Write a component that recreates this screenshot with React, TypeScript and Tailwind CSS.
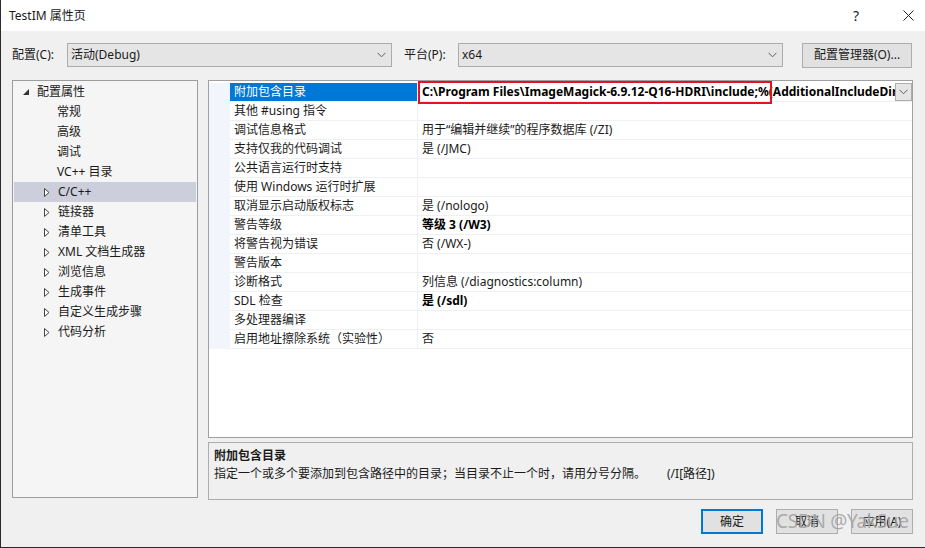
import type { ReactNode } from "react";

const rows: { name: string; value: string; bold?: boolean }[] = [
  { name: "附加包含目录", value: "C:\\Program Files\\ImageMagick-6.9.12-Q16-HDRI\\include;%(AdditionalIncludeDirectories)", bold: true },
  { name: "其他 #using 指令", value: "" },
  { name: "调试信息格式", value: "用于“编辑并继续”的程序数据库 (/ZI)" },
  { name: "支持仅我的代码调试", value: "是 (/JMC)" },
  { name: "公共语言运行时支持", value: "" },
  { name: "使用 Windows 运行时扩展", value: "" },
  { name: "取消显示启动版权标志", value: "是 (/nologo)" },
  { name: "警告等级", value: "等级 3 (/W3)", bold: true },
  { name: "将警告视为错误", value: "否 (/WX-)" },
  { name: "警告版本", value: "" },
  { name: "诊断格式", value: "列信息 (/diagnostics:column)" },
  { name: "SDL 检查", value: "是 (/sdl)", bold: true },
  { name: "多处理器编译", value: "" },
  { name: "启用地址擦除系统（实验性）", value: "否" },
];

const treeItems = ["链接器", "清单工具", "XML 文档生成器", "浏览信息", "生成事件", "自定义生成步骤", "代码分析"];

function Chevron() {
  return (
    <svg width="9" height="6" viewBox="0 0 9 6" className="shrink-0">
      <polyline points="0.5,0.8 4.5,4.8 8.5,0.8" fill="none" stroke="#606060" strokeWidth="1" />
    </svg>
  );
}

function Collapsed() {
  return (
    <svg width="6" height="9" viewBox="0 0 6 9" className="shrink-0">
      <polygon points="0.5,0.5 5,4.5 0.5,8.5" fill="#ffffff" stroke="#444444" strokeWidth="1" />
    </svg>
  );
}

function Combo({ children }: { children: ReactNode }) {
  return (
    <div className="flex h-[24px] w-[325px] items-center justify-between border border-[#acacac] bg-[#e5e5e5] pl-[3px] pr-[5px]">
      <span>{children}</span>
      <Chevron />
    </div>
  );
}

function Btn({ children, primary }: { children: ReactNode; primary?: boolean }) {
  return (
    <div
      className={`flex h-[25px] w-[62px] items-center justify-center bg-[#e1e1e1] ${
        primary ? "border-2 border-[#0078d7]" : "border border-[#adadad]"
      }`}
    >
      {children}
    </div>
  );
}

export default function App() {
  return (
    <div className="relative flex h-[548px] w-[925px] flex-col overflow-hidden border-b border-l border-[#2b2b2b] bg-[#f0f0f0] font-[Noto_Sans,Noto_Sans_CJK_SC,sans-serif] text-[12px] leading-[18px] text-[#1a1a1a]">
      <div className="flex h-[31px] shrink-0 items-center bg-white pl-[8px]">
        <span className="text-[12px]">TestIM 属性页</span>
        <span className="ml-auto mr-[44px] text-[14px] text-[#222]">?</span>
        <svg width="11" height="11" viewBox="0 0 11 11" className="mr-[11px]">
          <path d="M0.5 0.5 L10.5 10.5 M10.5 0.5 L0.5 10.5" stroke="#222" strokeWidth="1" />
        </svg>
      </div>

      <div className="mt-[12px] flex h-[24px] shrink-0 items-center pl-[11px]">
        <span className="w-[55px]">配置(C):</span>
        <Combo>活动(Debug)</Combo>
        <span className="ml-[12px] w-[54px]">平台(P):</span>
        <Combo>x64</Combo>
        <div className="ml-[19px] flex h-[25px] w-[110px] items-center justify-center border border-[#adadad] bg-[#e1e1e1]">
          配置管理器(O)...
        </div>
      </div>

      <div className="mt-[13px] flex h-[420px] shrink-0 pl-[11px]">
        <div className="h-[418px] w-[186px] border border-[#9c9c9f] bg-[#f5f5f5] pt-px">
          <div className="flex h-[20px] items-center pl-[10px]">
            <svg width="6" height="6" viewBox="0 0 6 6" className="shrink-0">
              <polygon points="6,0 6,6 0,6" fill="#333" />
            </svg>
            <span className="ml-[8px]">配置属性</span>
          </div>
          {["常规", "高级", "调试", "VC++ 目录"].map((t) => (
            <div key={t} className="flex h-[20px] items-center pl-[44px]">
              {t}
            </div>
          ))}
          <div className="mx-px flex h-[20px] items-center bg-[#cccedb] pl-[30px]">
            <Collapsed />
            <span className="ml-[8px]">C/C++</span>
          </div>
          {treeItems.map((t) => (
            <div key={t} className="flex h-[20px] items-center pl-[31px]">
              <Collapsed />
              <span className="ml-[8px]">{t}</span>
            </div>
          ))}
        </div>

        <div className="ml-[10px] flex w-[705px] flex-col">
          <div className="relative h-[358px] border border-[#a0a0a0] bg-white pt-[2px]">
            {rows.map((r, i) => (
              <div key={r.name} className="flex h-[19px]">
                <div className="w-[21px] shrink-0 bg-[#f2f5fb]" />
                <div
                  className={`flex w-[188px] shrink-0 items-center whitespace-nowrap border-b border-r border-[#eef0f4] pl-[4px] ${
                    i === 0 ? "bg-[#0078d7] text-white" : ""
                  }`}
                >
                  {r.name}
                </div>
                <div
                  className={`flex min-w-0 flex-1 items-center whitespace-nowrap border-b border-[#eef0f4] pl-[4px] ${
                    r.bold ? "font-bold text-black" : ""
                  }`}
                >
                  {i === 0 ? (
                    <>
                      <span className="min-w-0 flex-1 overflow-hidden">{r.value}</span>
                      <div className="flex h-[18px] w-[17px] shrink-0 items-center justify-center border border-[#adadad] bg-[#e5e5e5]">
                        <Chevron />
                      </div>
                    </>
                  ) : (
                    <span>{r.value}</span>
                  )}
                </div>
              </div>
            ))}
            <div className="absolute left-[209px] top-0 h-[23px] w-[354px] border-2 border-[#e81123]" />
          </div>

          <div className="mt-[4px] h-[58px] border border-[#adadad] bg-[#f0f0f0] pl-[5px] pt-[4px]">
            <div className="font-bold">附加包含目录</div>
            <div>
              指定一个或多个要添加到包含路径中的目录；当目录不止一个时，请用分号分隔。
              <span className="ml-[21px]">(/I[路径])</span>
            </div>
          </div>
        </div>
      </div>

      <div className="mt-[9px] flex shrink-0 justify-end gap-[13px] pr-[12px]">
        <Btn primary>确定</Btn>
        <Btn>取消</Btn>
        <Btn>应用(A)</Btn>
      </div>

      <div className="pointer-events-none absolute left-[775px] top-[512px] whitespace-nowrap text-[19px] leading-none tracking-[-0.3px] text-[#a3a3a3]/90">
        CSDN @YakSue
      </div>
    </div>
  );
}
